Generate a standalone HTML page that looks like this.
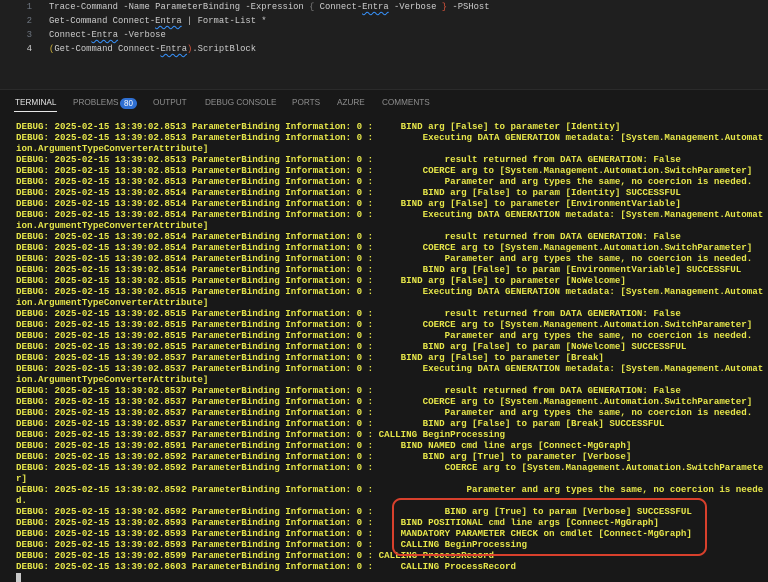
<!DOCTYPE html>
<html><head><meta charset="utf-8"><style>
body{margin:0;width:768px;height:582px;overflow:hidden;background:#181818;position:relative;font-family:"Liberation Mono",monospace}
#ed{position:absolute;left:0;top:0;width:768px;height:89px;background:#1f1f1f;border-bottom:1px solid #2b2b2b}
.ln{position:absolute;left:0;width:32px;text-align:right;color:#6e7681;font-size:9px}
.cd{position:absolute;left:49px;color:#cccccc;font-size:8.85px;white-space:pre}
.sq{text-decoration:underline wavy #3794ff;text-decoration-thickness:1px;text-underline-offset:2px}
#tabs{position:absolute;top:98px;left:15px;font-family:"Liberation Sans",sans-serif;font-size:8.2px;color:#8f8f8f;white-space:nowrap}
#tabs span{position:absolute;top:0}
.badge{position:absolute;left:105px;top:-1px;background:#2f6fd1;color:#fff;border-radius:7px;width:17px;text-align:center;font-size:8px;line-height:11px}
pre{position:absolute;left:16px;top:121px;margin:0;font-family:"Liberation Mono",monospace;font-size:9.17px;line-height:11px;font-weight:bold;color:#e6e64a;white-space:pre}
#box{position:absolute;left:392px;top:498px;width:311px;height:54px;border:2px solid #d8402c;border-radius:9px}
#cur{position:absolute;left:16px;top:573px;width:5px;height:9px;background:#c8c8c8}
</style></head><body>
<div id="ed">
<div class="ln" style="top:2px">1</div><div class="ln" style="top:16px">2</div><div class="ln" style="top:30px">3</div><div class="ln" style="top:44px;color:#ccc">4</div>
<div class="cd" style="top:2px">Trace-Command -Name ParameterBinding -Expression <span style="color:#777">{</span> Connect-<span class="sq">Entra</span> -Verbose <span style="color:#d5533b">}</span> -PSHost</div>
<div class="cd" style="top:16px">Get-Command Connect-<span class="sq">Entra</span> | Format-List *</div>
<div class="cd" style="top:30px">Connect-<span class="sq">Entra</span> -Verbose</div>
<div class="cd" style="top:44px"><span style="color:#d7ba3d">(</span>Get-Command Connect-<span class="sq">Entra</span><span style="color:#d5533b">)</span>.ScriptBlock</div>
</div>
<div id="tabs">
<span style="left:0;color:#e7e7e7">TERMINAL</span>
<span style="left:58px">PROBLEMS</span>
<span class="badge">80</span>
<span style="left:138px">OUTPUT</span>
<span style="left:190px">DEBUG CONSOLE</span>
<span style="left:277px">PORTS</span>
<span style="left:322px">AZURE</span>
<span style="left:367px">COMMENTS</span>
</div>
<div style="position:absolute;left:14px;top:111px;width:43px;height:1px;background:#e7e7e7"></div>
<pre>DEBUG: 2025-02-15 13:39:02.8513 ParameterBinding Information: 0 :     BIND arg [False] to parameter [Identity]
DEBUG: 2025-02-15 13:39:02.8513 ParameterBinding Information: 0 :         Executing DATA GENERATION metadata: [System.Management.Automat
ion.ArgumentTypeConverterAttribute]
DEBUG: 2025-02-15 13:39:02.8513 ParameterBinding Information: 0 :             result returned from DATA GENERATION: False
DEBUG: 2025-02-15 13:39:02.8513 ParameterBinding Information: 0 :         COERCE arg to [System.Management.Automation.SwitchParameter]
DEBUG: 2025-02-15 13:39:02.8513 ParameterBinding Information: 0 :             Parameter and arg types the same, no coercion is needed.
DEBUG: 2025-02-15 13:39:02.8514 ParameterBinding Information: 0 :         BIND arg [False] to param [Identity] SUCCESSFUL
DEBUG: 2025-02-15 13:39:02.8514 ParameterBinding Information: 0 :     BIND arg [False] to parameter [EnvironmentVariable]
DEBUG: 2025-02-15 13:39:02.8514 ParameterBinding Information: 0 :         Executing DATA GENERATION metadata: [System.Management.Automat
ion.ArgumentTypeConverterAttribute]
DEBUG: 2025-02-15 13:39:02.8514 ParameterBinding Information: 0 :             result returned from DATA GENERATION: False
DEBUG: 2025-02-15 13:39:02.8514 ParameterBinding Information: 0 :         COERCE arg to [System.Management.Automation.SwitchParameter]
DEBUG: 2025-02-15 13:39:02.8514 ParameterBinding Information: 0 :             Parameter and arg types the same, no coercion is needed.
DEBUG: 2025-02-15 13:39:02.8514 ParameterBinding Information: 0 :         BIND arg [False] to param [EnvironmentVariable] SUCCESSFUL
DEBUG: 2025-02-15 13:39:02.8515 ParameterBinding Information: 0 :     BIND arg [False] to parameter [NoWelcome]
DEBUG: 2025-02-15 13:39:02.8515 ParameterBinding Information: 0 :         Executing DATA GENERATION metadata: [System.Management.Automat
ion.ArgumentTypeConverterAttribute]
DEBUG: 2025-02-15 13:39:02.8515 ParameterBinding Information: 0 :             result returned from DATA GENERATION: False
DEBUG: 2025-02-15 13:39:02.8515 ParameterBinding Information: 0 :         COERCE arg to [System.Management.Automation.SwitchParameter]
DEBUG: 2025-02-15 13:39:02.8515 ParameterBinding Information: 0 :             Parameter and arg types the same, no coercion is needed.
DEBUG: 2025-02-15 13:39:02.8515 ParameterBinding Information: 0 :         BIND arg [False] to param [NoWelcome] SUCCESSFUL
DEBUG: 2025-02-15 13:39:02.8537 ParameterBinding Information: 0 :     BIND arg [False] to parameter [Break]
DEBUG: 2025-02-15 13:39:02.8537 ParameterBinding Information: 0 :         Executing DATA GENERATION metadata: [System.Management.Automat
ion.ArgumentTypeConverterAttribute]
DEBUG: 2025-02-15 13:39:02.8537 ParameterBinding Information: 0 :             result returned from DATA GENERATION: False
DEBUG: 2025-02-15 13:39:02.8537 ParameterBinding Information: 0 :         COERCE arg to [System.Management.Automation.SwitchParameter]
DEBUG: 2025-02-15 13:39:02.8537 ParameterBinding Information: 0 :             Parameter and arg types the same, no coercion is needed.
DEBUG: 2025-02-15 13:39:02.8537 ParameterBinding Information: 0 :         BIND arg [False] to param [Break] SUCCESSFUL
DEBUG: 2025-02-15 13:39:02.8537 ParameterBinding Information: 0 : CALLING BeginProcessing
DEBUG: 2025-02-15 13:39:02.8591 ParameterBinding Information: 0 :     BIND NAMED cmd line args [Connect-MgGraph]
DEBUG: 2025-02-15 13:39:02.8592 ParameterBinding Information: 0 :         BIND arg [True] to parameter [Verbose]
DEBUG: 2025-02-15 13:39:02.8592 ParameterBinding Information: 0 :             COERCE arg to [System.Management.Automation.SwitchParamete
r]
DEBUG: 2025-02-15 13:39:02.8592 ParameterBinding Information: 0 :                 Parameter and arg types the same, no coercion is neede
d.
DEBUG: 2025-02-15 13:39:02.8592 ParameterBinding Information: 0 :             BIND arg [True] to param [Verbose] SUCCESSFUL
DEBUG: 2025-02-15 13:39:02.8593 ParameterBinding Information: 0 :     BIND POSITIONAL cmd line args [Connect-MgGraph]
DEBUG: 2025-02-15 13:39:02.8593 ParameterBinding Information: 0 :     MANDATORY PARAMETER CHECK on cmdlet [Connect-MgGraph]
DEBUG: 2025-02-15 13:39:02.8593 ParameterBinding Information: 0 :     CALLING BeginProcessing
DEBUG: 2025-02-15 13:39:02.8599 ParameterBinding Information: 0 : CALLING ProcessRecord
DEBUG: 2025-02-15 13:39:02.8603 ParameterBinding Information: 0 :     CALLING ProcessRecord</pre>
<div id="box"></div>
<div id="cur"></div>
</body></html>
